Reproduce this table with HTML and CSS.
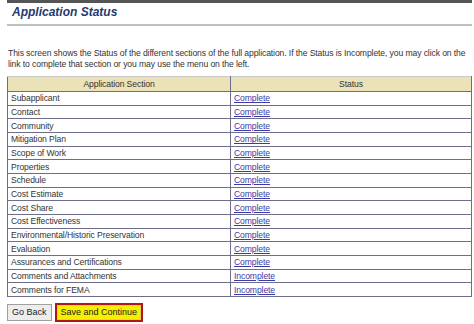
FILE: index.html
```html
<!DOCTYPE html>
<html>
<head>
<meta charset="utf-8">
<link rel="stylesheet" href="styles.css">
</head>
<body>
<div class="page">
  <div class="topbar"></div>
  <h1 class="title">Application Status</h1>
  <div class="rule"></div>
  <p class="intro">This screen shows the Status of the different sections of the full application. If the Status is Incomplete, you may click on the link to complete that section or you may use the menu on the left.</p>
  <table class="status">
    <thead>
      <tr><th class="c1">Application Section</th><th>Status</th></tr>
    </thead>
    <tbody>
      <tr><td>Subapplicant</td><td><a href="#">Complete</a></td></tr>
      <tr><td>Contact</td><td><a href="#">Complete</a></td></tr>
      <tr><td>Community</td><td><a href="#">Complete</a></td></tr>
      <tr><td>Mitigation Plan</td><td><a href="#">Complete</a></td></tr>
      <tr><td>Scope of Work</td><td><a href="#">Complete</a></td></tr>
      <tr><td>Properties</td><td><a href="#">Complete</a></td></tr>
      <tr><td>Schedule</td><td><a href="#">Complete</a></td></tr>
      <tr><td>Cost Estimate</td><td><a href="#">Complete</a></td></tr>
      <tr><td>Cost Share</td><td><a href="#">Complete</a></td></tr>
      <tr><td>Cost Effectiveness</td><td><a href="#">Complete</a></td></tr>
      <tr><td>Environmental/Historic Preservation</td><td><a href="#">Complete</a></td></tr>
      <tr><td>Evaluation</td><td><a href="#">Complete</a></td></tr>
      <tr><td>Assurances and Certifications</td><td><a href="#">Complete</a></td></tr>
      <tr><td>Comments and Attachments</td><td><a href="#">Incomplete</a></td></tr>
      <tr><td>Comments for FEMA</td><td><a href="#">Incomplete</a></td></tr>
    </tbody>
  </table>
  <div class="buttons">
    <button class="btn">Go Back</button>
    <button class="btn btn-save">Save and Continue</button>
  </div>
</div>
</body>
</html>
```
FILE: styles.css
```css
html, body {
  margin: 0;
  padding: 0;
  background: #ffffff;
}
body {
  font-family: "Liberation Sans", Arial, sans-serif;
  color: #333333;
  font-size: 8.6px;
  letter-spacing: -0.1px;
}
.page {
  padding: 0 2px 0 7px;
}
.topbar {
  height: 3px;
  background: #555555;
}
.title {
  margin: 0;
  padding: 1px 0 0 5px;
  height: 20px;
  box-sizing: border-box;
  font-size: 12px;
  font-style: italic;
  font-weight: bold;
  color: #1f3b6f;
  line-height: 16px;
  letter-spacing: 0;
}
.rule {
  height: 2px;
  background: #c0c0c0;
  margin-top: 1px;
}
.intro {
  margin: 22px 0 0 1px;
  line-height: 11px;
  color: #333;
}
.status {
  margin-top: 6px;
  width: 465px;
  border-collapse: collapse;
  border: 1px solid #6e6e8c;
}
.status th {
  background: #ece2b8;
  font-weight: normal;
  color: #333;
  height: 14px;
  padding: 0;
  border: 1px solid #6e6e8c;
  border-top-color: #c8c8c8;
  line-height: 12px;
}
.status th.c1 {
  width: 222px;
}
.status td {
  height: 12.67px;
  padding: 0 3px;
  border: 1px solid #6e6e8c;
  line-height: 12px;
}
.status a {
  color: #3a3aa8;
  text-decoration: underline;
}
.buttons {
  margin-top: 6px;
  display: flex;
  gap: 3px;
  align-items: center;
}
.btn {
  font-family: "Liberation Sans", Arial, sans-serif;
  font-size: 9px;
  color: #222;
  background: #ededed;
  border: 1px solid #a0a0a0;
  height: 17px;
  padding: 0 4px;
  margin: 0;
}
.btn-save {
  background: #f6f000;
  border: 2px solid #b01818;
  height: 19px;
  padding: 0 4px;
  box-shadow: inset 0 0 0 1px #e8d24a;
}
```
